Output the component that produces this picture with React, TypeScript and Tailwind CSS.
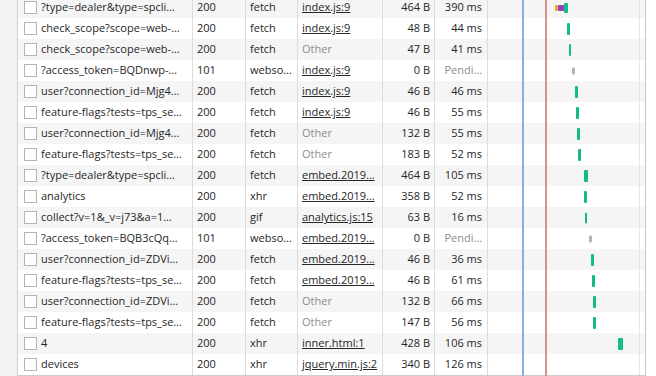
type Seg = { left: number; width: number; height: number; color: string };

type Row = {
  name: string;
  status: string;
  type: string;
  initiator: string;
  link: boolean;
  size: string;
  time: string;
  pending?: boolean;
  bars: Seg[];
};

const G = '#13bb8a';
const green = (left: number, width = 3, height = 11): Seg => ({ left, width, height, color: G });
const grey = (left: number): Seg => ({ left, width: 3, height: 7, color: '#b5b5b5' });

const rows: Row[] = [
  { name: '?type=dealer&type=spcli…', status: '200', type: 'fetch', initiator: 'index.js:9', link: true, size: '464 B', time: '390 ms',
    bars: [{ left: 555, width: 3, height: 6, color: '#f4a236' }, { left: 558, width: 6, height: 6, color: '#a43cc0' }, green(564, 4, 10)] },
  { name: 'check_scope?scope=web-…', status: '200', type: 'fetch', initiator: 'index.js:9', link: true, size: '48 B', time: '44 ms', bars: [green(567, 3, 12)] },
  { name: 'check_scope?scope=web-…', status: '200', type: 'fetch', initiator: 'Other', link: false, size: '47 B', time: '41 ms', bars: [green(569, 2, 12)] },
  { name: '?access_token=BQDnwp-…', status: '101', type: 'webso…', initiator: 'index.js:9', link: true, size: '0 B', time: 'Pendi…', pending: true, bars: [grey(572)] },
  { name: 'user?connection_id=Mjg4…', status: '200', type: 'fetch', initiator: 'index.js:9', link: true, size: '46 B', time: '46 ms', bars: [green(575, 3, 12)] },
  { name: 'feature-flags?tests=tps_se…', status: '200', type: 'fetch', initiator: 'index.js:9', link: true, size: '46 B', time: '55 ms', bars: [green(576, 3, 12)] },
  { name: 'user?connection_id=Mjg4…', status: '200', type: 'fetch', initiator: 'Other', link: false, size: '132 B', time: '55 ms', bars: [green(577, 3, 12)] },
  { name: 'feature-flags?tests=tps_se…', status: '200', type: 'fetch', initiator: 'Other', link: false, size: '183 B', time: '52 ms', bars: [green(578, 3, 12)] },
  { name: '?type=dealer&type=spcli…', status: '200', type: 'fetch', initiator: 'embed.2019…', link: true, size: '464 B', time: '105 ms', bars: [green(584, 4, 12)] },
  { name: 'analytics', status: '200', type: 'xhr', initiator: 'embed.2019…', link: true, size: '358 B', time: '52 ms', bars: [green(584, 3, 12)] },
  { name: 'collect?v=1&_v=j73&a=1…', status: '200', type: 'gif', initiator: 'analytics.js:15', link: true, size: '63 B', time: '16 ms', bars: [green(585, 2, 11)] },
  { name: '?access_token=BQB3cQq…', status: '101', type: 'webso…', initiator: 'embed.2019…', link: true, size: '0 B', time: 'Pendi…', pending: true, bars: [grey(589)] },
  { name: 'user?connection_id=ZDVi…', status: '200', type: 'fetch', initiator: 'embed.2019…', link: true, size: '46 B', time: '36 ms', bars: [green(591, 3, 12)] },
  { name: 'feature-flags?tests=tps_se…', status: '200', type: 'fetch', initiator: 'embed.2019…', link: true, size: '46 B', time: '61 ms', bars: [green(592, 3, 12)] },
  { name: 'user?connection_id=ZDVi…', status: '200', type: 'fetch', initiator: 'Other', link: false, size: '132 B', time: '66 ms', bars: [green(593, 3, 12)] },
  { name: 'feature-flags?tests=tps_se…', status: '200', type: 'fetch', initiator: 'Other', link: false, size: '147 B', time: '56 ms', bars: [green(593, 3, 12)] },
  { name: '4', status: '200', type: 'xhr', initiator: 'inner.html:1', link: true, size: '428 B', time: '106 ms', bars: [green(618, 5, 12)] },
  { name: 'devices', status: '200', type: 'xhr', initiator: 'jquery.min.js:2', link: true, size: '340 B', time: '126 ms', bars: [] },
];

// waterfall column starts at x=488 on the page
const WF = 488;

export default function App() {
  return (
    <div
      className="flex h-[376px] w-[656px] overflow-hidden bg-white text-[11px] text-[#262626]"
      style={{ fontFamily: '"Open Sans", "Noto Sans", sans-serif' }}
    >
      <div className="w-[18px] shrink-0 border-r border-[#cfcfcf] bg-[#f3f3f3]" />

      <div className="relative w-[628px] shrink-0 overflow-hidden">
        <div className="-mt-[3px] border-b border-[#cdcdcd]">
          {rows.map((r, i) => (
            <div
              key={i}
              className={`grid h-[21px] grid-cols-[175px_53px_52px_85px_52px_53px_152px_6px] items-center ${
                i % 2 === 0 ? 'bg-[#f5f5f5]' : 'bg-white'
              }`}
            >
              <div className="flex h-full items-center gap-[4px] overflow-hidden whitespace-nowrap border-r border-[#dcdcdc] pl-[6px]">
                <span className="h-[13px] w-[13px] shrink-0 border border-[#b4b4b4] bg-white" />
                <span>{r.name}</span>
              </div>
              <div className="flex h-full items-center border-r border-[#dcdcdc] pl-[4px]">{r.status}</div>
              <div className="flex h-full items-center overflow-hidden whitespace-nowrap border-r border-[#dcdcdc] pl-[4px]">{r.type}</div>
              <div className="flex h-full items-center overflow-hidden whitespace-nowrap border-r border-[#dcdcdc] pl-[4px]">
                {r.link ? <span className="underline">{r.initiator}</span> : <span className="text-[#8c8c8c]">{r.initiator}</span>}
              </div>
              <div className="flex h-full items-center justify-end border-r border-[#dcdcdc] pr-[4px]">{r.size}</div>
              <div className={`flex h-full items-center justify-end border-r border-[#dcdcdc] pr-[5px] ${r.pending ? 'text-[#8c8c8c]' : ''}`}>
                {r.time}
              </div>
              <div className="relative h-full border-r border-[#e6e6e6]">
                {r.bars.map((b, j) => (
                  <span
                    key={j}
                    className="absolute top-1/2 -translate-y-1/2 rounded-[1px]"
                    style={{ left: b.left - WF, width: b.width, height: b.height, backgroundColor: b.color }}
                  />
                ))}
              </div>
              <div className="h-full border-r border-[#c8c8c8]" />
            </div>
          ))}
        </div>

        {/* DOMContentLoaded / load markers */}
        <div className="pointer-events-none absolute bottom-0 left-[504px] top-0 w-[2px] bg-[#8aaee0]" />
        <div className="pointer-events-none absolute bottom-0 left-[527px] top-0 w-[2px] bg-[#d49393]" />
      </div>

      <div className="flex-1 bg-white" />
    </div>
  );
}
